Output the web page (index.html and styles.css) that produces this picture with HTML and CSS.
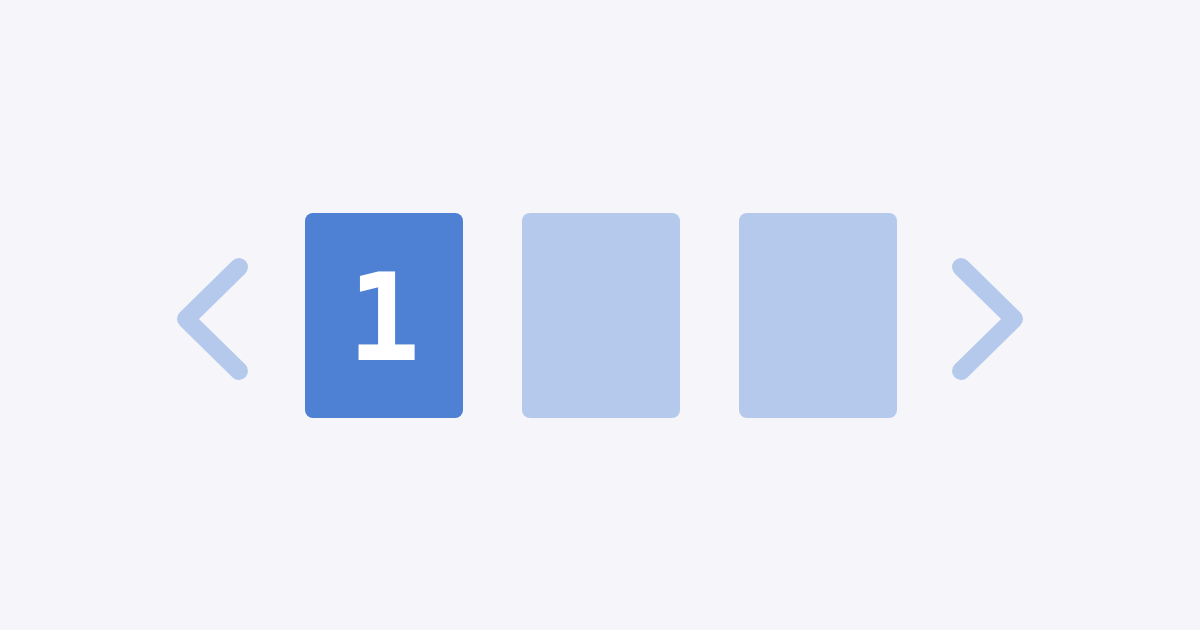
FILE: index.html
```html
<!DOCTYPE html>
<html lang="en">
<head>
    <meta charset="UTF-8">
    <meta name="viewport" content="width=device-width, initial-scale=1.0">
    <title>Pager</title>
    <link rel="stylesheet" href="styles.css">
</head>
<body>
    <nav class="pager">
        <a href="#" class="chev chev-prev" aria-label="Previous">
            <svg width="72" height="122" viewBox="0 0 72 122">
                <path d="M62 9 L9 61 L62 113" />
            </svg>
        </a>
        <div class="pages">
            <a href="#" class="page active">1</a>
            <a href="#" class="page"></a>
            <a href="#" class="page"></a>
        </div>
        <a href="#" class="chev chev-next" aria-label="Next">
            <svg width="72" height="122" viewBox="0 0 72 122">
                <path d="M10 9 L63 61 L10 113" />
            </svg>
        </a>
    </nav>
</body>
</html>
```

FILE: styles.css
```css
/* Pager */
body {
    margin: 0;
    background-color: #f5f5fa;
    font-family: "DejaVu Sans", sans-serif;
}

.pager {
    height: 630px;
    display: flex;
    align-items: center;
    justify-content: center;
}

.pages {
    display: flex;
    gap: 59px;
}

.page {
    width: 158px;
    height: 205px;
    box-sizing: border-box;
    padding-top: 6px;
    border-radius: 8px;
    background-color: #b4c9eb;
    display: flex;
    align-items: center;
    justify-content: center;
    color: #fff;
    text-decoration: none;
    font-family: "DejaVu Sans Mono", monospace;
    font-size: 121px;
    font-weight: bold;
    line-height: 1;
}

.page.active {
    background-color: #4e80d4;
}

.chev {
    display: block;
    margin-top: 8px;
}

.chev svg {
    display: block;
}

.chev path {
    fill: none;
    stroke: #b4c9eb;
    stroke-width: 18;
    stroke-linecap: round;
    stroke-linejoin: round;
}

.chev-prev {
    margin-right: 56px;
}

.chev-next {
    margin-left: 54px;
}
```
